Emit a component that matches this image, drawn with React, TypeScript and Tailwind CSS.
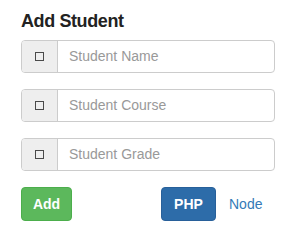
import React from "react";

function Field({ placeholder }: { placeholder: string }) {
  return (
    <div className="flex h-[33px] w-[254px] rounded-[4px] border border-[#cccccc] bg-white">
      <div className="flex w-[36px] items-center justify-center rounded-l-[3px] border-r border-[#cccccc] bg-[#eeeeee]">
        <div className="h-[9px] w-[9px] border-[1.5px] border-[#4a4a4a]" />
      </div>
      <div className="flex flex-1 items-center pl-[11px] text-[14px] text-[#999999]">
        {placeholder}
      </div>
    </div>
  );
}

export default function App() {
  return (
    <div
      className="h-[240px] w-[303px] bg-white pl-[21px] pt-[11px]"
      style={{ fontFamily: '"Liberation Sans", Arial, sans-serif' }}
    >
      <h4 className="text-[18px] font-bold leading-[20px] tracking-[-0.4px] text-[#222222]">Add Student</h4>
      <div className="mt-[9px] flex flex-col gap-[16px]">
        <Field placeholder="Student Name" />
        <Field placeholder="Student Course" />
        <Field placeholder="Student Grade" />
      </div>
      <div className="mt-[16px] flex h-[34px] items-stretch">
        <button className="flex w-[51px] items-center justify-center rounded-[4px] border border-[#4cae4c] bg-[#5cb85c] text-[14px] font-bold text-white">
          Add
        </button>
        <button className="ml-[89px] flex w-[55px] items-center justify-center rounded-[4px] border border-[#28609a] bg-[#2d6ca9] text-[14px] font-bold text-white">
          PHP
        </button>
        <button className="flex items-center px-[13px] text-[14px] text-[#337ab7]">Node</button>
      </div>
    </div>
  );
}
